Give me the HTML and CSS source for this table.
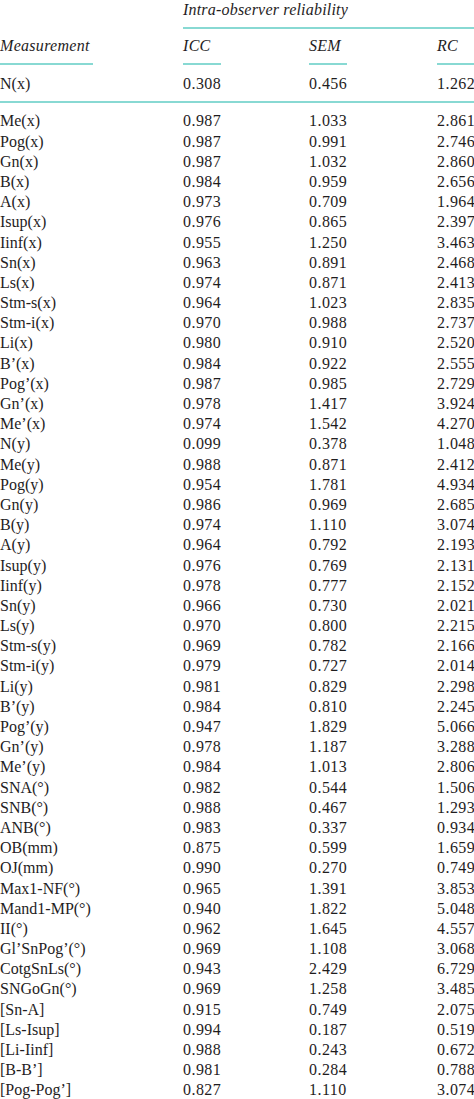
FILE: index.html
```html
<!DOCTYPE html>
<html lang="en">
<head>
<meta charset="utf-8">
<title>Intra-observer reliability</title>
<link rel="stylesheet" href="styles.css">
</head>
<body>
<div class="table">
  <div class="group-row"><div class="group-label">Intra-observer reliability</div></div>
  <div class="row head">
    <div class="cell"><span class="rule rule-wide">Measurement</span></div>
    <div class="cell"><span class="rule">ICC</span></div>
    <div class="cell"><span class="rule">SEM</span></div>
    <div class="cell"><span class="rule">RC</span></div>
  </div>
  <div class="row first"><div>N(x)</div><div>0.308</div><div>0.456</div><div>1.262</div></div>
  <div class="body">
    <div class="row"><div>Me(x)</div><div>0.987</div><div>1.033</div><div>2.861</div></div>
    <div class="row"><div>Pog(x)</div><div>0.987</div><div>0.991</div><div>2.746</div></div>
    <div class="row"><div>Gn(x)</div><div>0.987</div><div>1.032</div><div>2.860</div></div>
    <div class="row"><div>B(x)</div><div>0.984</div><div>0.959</div><div>2.656</div></div>
    <div class="row"><div>A(x)</div><div>0.973</div><div>0.709</div><div>1.964</div></div>
    <div class="row"><div>Isup(x)</div><div>0.976</div><div>0.865</div><div>2.397</div></div>
    <div class="row"><div>Iinf(x)</div><div>0.955</div><div>1.250</div><div>3.463</div></div>
    <div class="row"><div>Sn(x)</div><div>0.963</div><div>0.891</div><div>2.468</div></div>
    <div class="row"><div>Ls(x)</div><div>0.974</div><div>0.871</div><div>2.413</div></div>
    <div class="row"><div>Stm-s(x)</div><div>0.964</div><div>1.023</div><div>2.835</div></div>
    <div class="row"><div>Stm-i(x)</div><div>0.970</div><div>0.988</div><div>2.737</div></div>
    <div class="row"><div>Li(x)</div><div>0.980</div><div>0.910</div><div>2.520</div></div>
    <div class="row"><div>B’(x)</div><div>0.984</div><div>0.922</div><div>2.555</div></div>
    <div class="row"><div>Pog’(x)</div><div>0.987</div><div>0.985</div><div>2.729</div></div>
    <div class="row"><div>Gn’(x)</div><div>0.978</div><div>1.417</div><div>3.924</div></div>
    <div class="row"><div>Me’(x)</div><div>0.974</div><div>1.542</div><div>4.270</div></div>
    <div class="row"><div>N(y)</div><div>0.099</div><div>0.378</div><div>1.048</div></div>
    <div class="row"><div>Me(y)</div><div>0.988</div><div>0.871</div><div>2.412</div></div>
    <div class="row"><div>Pog(y)</div><div>0.954</div><div>1.781</div><div>4.934</div></div>
    <div class="row"><div>Gn(y)</div><div>0.986</div><div>0.969</div><div>2.685</div></div>
    <div class="row"><div>B(y)</div><div>0.974</div><div>1.110</div><div>3.074</div></div>
    <div class="row"><div>A(y)</div><div>0.964</div><div>0.792</div><div>2.193</div></div>
    <div class="row"><div>Isup(y)</div><div>0.976</div><div>0.769</div><div>2.131</div></div>
    <div class="row"><div>Iinf(y)</div><div>0.978</div><div>0.777</div><div>2.152</div></div>
    <div class="row"><div>Sn(y)</div><div>0.966</div><div>0.730</div><div>2.021</div></div>
    <div class="row"><div>Ls(y)</div><div>0.970</div><div>0.800</div><div>2.215</div></div>
    <div class="row"><div>Stm-s(y)</div><div>0.969</div><div>0.782</div><div>2.166</div></div>
    <div class="row"><div>Stm-i(y)</div><div>0.979</div><div>0.727</div><div>2.014</div></div>
    <div class="row"><div>Li(y)</div><div>0.981</div><div>0.829</div><div>2.298</div></div>
    <div class="row"><div>B’(y)</div><div>0.984</div><div>0.810</div><div>2.245</div></div>
    <div class="row"><div>Pog’(y)</div><div>0.947</div><div>1.829</div><div>5.066</div></div>
    <div class="row"><div>Gn’(y)</div><div>0.978</div><div>1.187</div><div>3.288</div></div>
    <div class="row"><div>Me’(y)</div><div>0.984</div><div>1.013</div><div>2.806</div></div>
    <div class="row"><div>SNA(°)</div><div>0.982</div><div>0.544</div><div>1.506</div></div>
    <div class="row"><div>SNB(°)</div><div>0.988</div><div>0.467</div><div>1.293</div></div>
    <div class="row"><div>ANB(°)</div><div>0.983</div><div>0.337</div><div>0.934</div></div>
    <div class="row"><div>OB(mm)</div><div>0.875</div><div>0.599</div><div>1.659</div></div>
    <div class="row"><div>OJ(mm)</div><div>0.990</div><div>0.270</div><div>0.749</div></div>
    <div class="row"><div>Max1-NF(°)</div><div>0.965</div><div>1.391</div><div>3.853</div></div>
    <div class="row"><div>Mand1-MP(°)</div><div>0.940</div><div>1.822</div><div>5.048</div></div>
    <div class="row"><div>II(°)</div><div>0.962</div><div>1.645</div><div>4.557</div></div>
    <div class="row"><div>Gl’SnPog’(°)</div><div>0.969</div><div>1.108</div><div>3.068</div></div>
    <div class="row"><div>CotgSnLs(°)</div><div>0.943</div><div>2.429</div><div>6.729</div></div>
    <div class="row"><div>SNGoGn(°)</div><div>0.969</div><div>1.258</div><div>3.485</div></div>
    <div class="row"><div>[Sn-A]</div><div>0.915</div><div>0.749</div><div>2.075</div></div>
    <div class="row"><div>[Ls-Isup]</div><div>0.994</div><div>0.187</div><div>0.519</div></div>
    <div class="row"><div>[Li-Iinf]</div><div>0.988</div><div>0.243</div><div>0.672</div></div>
    <div class="row"><div>[B-B’]</div><div>0.981</div><div>0.284</div><div>0.788</div></div>
    <div class="row"><div>[Pog-Pog’]</div><div>0.827</div><div>1.110</div><div>3.074</div></div>
  </div>
</div>
</body>
</html>
```
FILE: styles.css
```css
html, body {
  margin: 0;
  padding: 0;
  background: #ffffff;
  overflow: hidden;
}

body {
  font-family: "Liberation Serif", "Times New Roman", serif;
  font-size: 16px;
  line-height: 20.2px;
  color: #1f1d1e;
  width: 474px;
}

.table {
  width: 474px;
}

.group-row {
  padding-left: 183px;
}

.group-label {
  font-style: italic;
  letter-spacing: 0.2px;
  padding-bottom: 7px;
  border-bottom: 2px solid #88d9d3;
  white-space: nowrap;
}

.row {
  display: grid;
  grid-template-columns: 183px 126px 128px 37px;
  height: 20.2px;
  white-space: nowrap;
}

.row > div + div {
  letter-spacing: 0.45px;
}

.head {
  margin-top: 6.5px;
  height: auto;
  font-style: italic;
  letter-spacing: 0.3px;
}

.head > div + div {
  letter-spacing: 0.3px;
}

.rule {
  display: inline-block;
  width: 38px;
  padding-bottom: 7.5px;
  border-bottom: 2px solid #88d9d3;
}

.rule-wide {
  width: 93px;
}

.first {
  margin-top: 8.5px;
  height: auto;
  padding-bottom: 7.3px;
  border-bottom: 2px solid #88d9d3;
}

.body {
  padding-top: 8px;
}
```
